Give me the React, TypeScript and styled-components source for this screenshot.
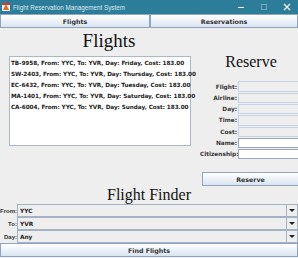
import styled, { createGlobalStyle } from "styled-components";

const GlobalStyle = createGlobalStyle`
  html, body { margin: 0; padding: 0; background: #eeeeee; }
  body { width: 298px; height: 258px; overflow: hidden; font-family: "Liberation Sans", Arial, sans-serif; }
`;

const flights = [
  "TB-9958, From: YYC, To: YVR, Day: Friday, Cost: 183.00",
  "SW-2403, From: YYC, To: YVR, Day: Thursday, Cost: 183.00",
  "EC-6432, From: YYC, To: YVR, Day: Tuesday, Cost: 183.00",
  "MA-1401, From: YYC, To: YVR, Day: Saturday, Cost: 183.00",
  "CA-6004, From: YYC, To: YVR, Day: Sunday, Cost: 183.00",
];

const reserveFields = [
  { label: "Flight:", editable: false },
  { label: "Airline:", editable: false },
  { label: "Day:", editable: false },
  { label: "Time:", editable: false },
  { label: "Cost:", editable: false },
  { label: "Name:", editable: true },
  { label: "Citizenship:", editable: true },
];

const finder = [
  { label: "From:", value: "YYC" },
  { label: "To:", value: "YVR" },
  { label: "Day:", value: "Any" },
];

const App: React.FC = () => {
  return (
    <Window>
      <GlobalStyle />
      <TitleBar>
        <AppIcon>
          <svg width="8" height="8" viewBox="0 0 8 8">
            <rect x="0" y="0" width="8" height="8" fill="#f4f4f4" />
            <path d="M1 7 L4 1 L7 7 Z" fill="#e06a1e" />
            <rect x="0" y="0" width="8" height="2" fill="#d33" />
          </svg>
        </AppIcon>
        <Title>Flight Reservation Management System</Title>
        <Controls>
          <Ctrl>
            <svg width="8" height="8" viewBox="0 0 8 8">
              <line x1="1" y1="4.5" x2="7" y2="4.5" stroke="#fff" strokeWidth="1" />
            </svg>
          </Ctrl>
          <Ctrl>
            <svg width="8" height="8" viewBox="0 0 8 8">
              <rect x="1.5" y="1.5" width="5" height="5" fill="none" stroke="#6fa7bc" strokeWidth="1" />
            </svg>
          </Ctrl>
          <Ctrl>
            <svg width="8" height="8" viewBox="0 0 8 8">
              <path d="M1 1 L7 7 M7 1 L1 7" stroke="#fff" strokeWidth="1.1" />
            </svg>
          </Ctrl>
        </Controls>
      </TitleBar>
      <Tabs>
        <TabButton>Flights</TabButton>
        <TabButton>Reservations</TabButton>
      </Tabs>
      <Main>
        <LeftCol>
          <Heading $size={19} $shift={18}>Flights</Heading>
          <ListBox>
            {flights.map((f) => (
              <ListItem key={f}>{f}</ListItem>
            ))}
          </ListBox>
        </LeftCol>
        <RightCol>
          <Heading $size={16} $shift={4}>Reserve</Heading>
          <FormGrid>
            {reserveFields.map((r) => (
              <FormRow key={r.label}>
                <FieldLabel>{r.label}</FieldLabel>
                <TextField $editable={r.editable} />
              </FormRow>
            ))}
          </FormGrid>
          <ReserveButton>Reserve</ReserveButton>
        </RightCol>
      </Main>
      <Finder>
        <Heading $size={16}>Flight Finder</Heading>
        {finder.map((f) => (
          <ComboRow key={f.label}>
            <ComboLabel>{f.label}</ComboLabel>
            <Combo>
              <ComboValue>{f.value}</ComboValue>
              <Arrow>
                <svg width="6" height="4" viewBox="0 0 6 4">
                  <path d="M0 0 L6 0 L3 3 Z" fill="#222" />
                </svg>
              </Arrow>
            </Combo>
          </ComboRow>
        ))}
        <FindButton>Find Flights</FindButton>
      </Finder>
    </Window>
  );
};

const Window = styled.div`
  width: 298px;
  height: 258px;
  display: flex;
  flex-direction: column;
  background: #eeeeee;
  overflow: hidden;
`;

const TitleBar = styled.div`
  height: 14px;
  flex-shrink: 0;
  background: #2b7d99;
  display: flex;
  align-items: center;
  padding-left: 2px;
`;

const AppIcon = styled.div`
  width: 8px;
  height: 8px;
  display: flex;
`;

const Title = styled.div`
  margin-left: 3px;
  color: #dcebf1;
  font-size: 6.3px;
  font-family: "Liberation Sans", Arial, sans-serif;
  white-space: nowrap;
  flex: 1;
`;

const Controls = styled.div`
  display: flex;
  gap: 15px;
  padding-right: 7px;
`;

const Ctrl = styled.div`
  width: 8px;
  height: 8px;
  display: flex;
`;

const buttonLook = `
  background: linear-gradient(#ffffff 0%, #eef3f9 45%, #d9e4ef 100%);
  border: 1px solid #8fa5bf;
  font-family: "DejaVu Sans", sans-serif;
  font-weight: bold;
  font-size: 6.3px;
  color: #333;
  display: flex;
  align-items: center;
  justify-content: center;
  box-sizing: border-box;
`;

const Tabs = styled.div`
  height: 14px;
  flex-shrink: 0;
  display: grid;
  grid-template-columns: 150px 148px;
`;

const TabButton = styled.div`
  ${buttonLook}
`;

const Main = styled.div`
  display: flex;
  height: 158px;
  flex-shrink: 0;
`;

const LeftCol = styled.div`
  width: 200px;
  display: flex;
  flex-direction: column;
  align-items: center;
  padding-top: 2px;
`;

const Heading = styled.div<{ $size: number; $shift?: number }>`
  font-family: "Liberation Serif", "Times New Roman", serif;
  font-size: ${(p) => p.$size}px;
  color: #111;
  line-height: 1.15;
  text-align: center;
  padding-left: ${(p) => p.$shift ?? 0}px;
`;

const ListBox = styled.div`
  margin-top: 4px;
  width: 182px;
  height: 90px;
  box-sizing: border-box;
  background: #fff;
  border: 1px solid #aab8c8;
  padding: 1px 1px;
  align-self: flex-start;
  margin-left: 9px;
`;

const ListItem = styled.div`
  font-family: "DejaVu Sans", sans-serif;
  font-weight: bold;
  font-size: 5.7px;
  line-height: 11px;
  color: #222;
  white-space: nowrap;
  letter-spacing: -0.05px;
`;

const RightCol = styled.div`
  flex: 1;
  display: flex;
  flex-direction: column;
  align-items: center;
  padding-top: 25px;
`;

const FormGrid = styled.div`
  margin-top: 10px;
  align-self: stretch;
  display: flex;
  flex-direction: column;
  gap: 1px;
`;

const FormRow = styled.div`
  display: grid;
  grid-template-columns: 38px 1fr;
  height: 10.3px;
  align-items: center;
`;

const FieldLabel = styled.div`
  font-family: "DejaVu Sans", sans-serif;
  font-weight: bold;
  font-size: 5.8px;
  color: #333;
  text-align: right;
  padding-right: 1px;
  white-space: nowrap;
`;

const TextField = styled.div<{ $editable: boolean }>`
  height: 10.3px;
  box-sizing: border-box;
  border: 1px solid ${(p) => (p.$editable ? "#9aa9ba" : "#c4d4e4")};
  background: ${(p) => (p.$editable ? "#ffffff" : "#eeeeee")};
  margin-right: -2px;
`;

const ReserveButton = styled.div`
  ${buttonLook}
  margin-top: 13px;
  align-self: flex-end;
  width: 97px;
  height: 14px;
  margin-right: -1px;
`;

const Finder = styled.div`
  flex: 1;
  display: flex;
  flex-direction: column;
  align-items: center;
`;

const ComboRow = styled.div`
  align-self: stretch;
  display: grid;
  grid-template-columns: 17px 1fr;
  height: 13px;
  align-items: center;
`;

const ComboLabel = styled.div`
  font-family: "Liberation Sans", Arial, sans-serif;
  font-weight: bold;
  font-size: 6px;
  color: #333;
  text-align: right;
  white-space: nowrap;
`;

const Combo = styled.div`
  height: 13px;
  box-sizing: border-box;
  border: 1px solid #a3b2c4;
  background: #eeeeee;
  display: flex;
  align-items: center;
`;

const ComboValue = styled.div`
  flex: 1;
  padding-left: 2px;
  font-family: "DejaVu Sans", sans-serif;
  font-weight: bold;
  font-size: 5.8px;
  color: #222;
`;

const Arrow = styled.div`
  width: 10px;
  height: 11px;
  border-left: 1px solid #a3b2c4;
  display: flex;
  align-items: center;
  justify-content: center;
`;

const FindButton = styled.div`
  ${buttonLook}
  align-self: stretch;
  height: 14px;
`;

export default App;
